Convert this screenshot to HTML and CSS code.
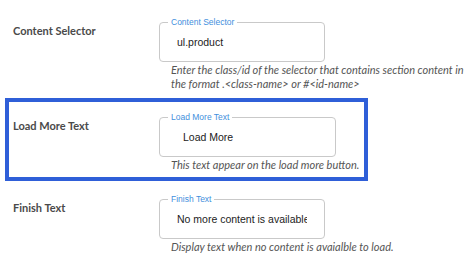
FILE: index.html
```html
<!DOCTYPE html>
<html>
<head>
  <title>Load More Settings</title>
  <link rel="stylesheet" href="styles.css">
</head>
<body>

<div class="settings">

  <div class="row">
    <div class="row-label">Content Selector</div>
    <div class="row-body">
      <div class="field">
        <span class="field-label">Content Selector</span>
        <input type="text" value="ul.product">
      </div>
      <p class="help">Enter the class/id of the selector that contains section content in the format .&lt;class-name&gt; or #&lt;id-name&gt;</p>
    </div>
  </div>

  <div class="row active">
    <div class="row-label">Load More Text</div>
    <div class="row-body">
      <div class="field wide">
        <span class="field-label">Load More Text</span>
        <input type="text" class="pad-more" value="Load More">
      </div>
      <p class="help">This text appear on the load more button.</p>
    </div>
  </div>

  <div class="row">
    <div class="row-label">Finish Text</div>
    <div class="row-body">
      <div class="field">
        <span class="field-label">Finish Text</span>
        <input type="text" value="No more content is available">
      </div>
      <p class="help">Display text when no content is avaialble to load.</p>
    </div>
  </div>

</div>

</body>
</html>
```

FILE: styles.css
```css
body {
  margin: 0;
  background-color: #fff;
  font-family: "Lato", "Open Sans", sans-serif;
}

.settings {
  padding: 3px 0 0 5px;
}

.row {
  display: flex;
  align-items: flex-start;
  width: 363px;
  box-sizing: border-box;
  padding: 15px 0 5px 4px;
  border: 4px solid transparent;
}

.row.active {
  border-color: #2f5fd8;
}

.row + .row {
  margin-top: -1px;
}

.row-label {
  flex: 0 0 146px;
  padding-top: 1px;
  font-size: 11px;
  line-height: 16px;
  font-weight: 700;
  color: #4a4a4a;
}

.row-body {
  flex: 1;
  min-width: 0;
}

.field {
  position: relative;
  width: 166px;
  height: 40px;
  box-sizing: border-box;
  border: 1px solid #c9c9c9;
  border-radius: 4px;
}

.field.wide {
  width: 177px;
}

.field-label {
  position: absolute;
  top: -6px;
  left: 8px;
  padding: 0 3px;
  background: #fff;
  font-family: "Liberation Sans", Arial, sans-serif;
  font-size: 8.5px;
  line-height: 10px;
  color: #3f8fdd;
}

.field input {
  width: 100%;
  height: 100%;
  box-sizing: border-box;
  padding: 0 17px;
  border: none;
  outline: none;
  background: transparent;
  font-family: "Liberation Sans", Arial, sans-serif;
  font-size: 10.5px;
  color: #222;
}

.field input.pad-more {
  padding-left: 23px;
}

.help {
  width: 300px;
  margin: 1px 0 0 12px;
  font-size: 11px;
  line-height: 13.5px;
  font-style: italic;
  color: #555;
}
```
